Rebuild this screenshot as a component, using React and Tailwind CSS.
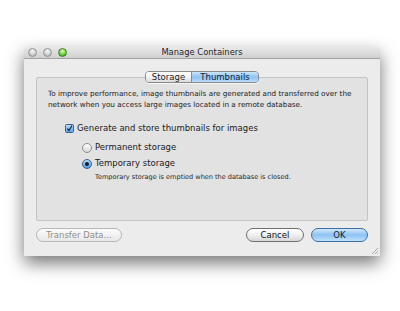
import React from "react";

const font = { fontFamily: '"DejaVu Sans", "Liberation Sans", sans-serif' };

function Light({ color }) {
  const styles = {
    gray: "bg-[radial-gradient(circle_at_50%_30%,#f7f7f7,#cdcdcd_60%,#a5a5a5)] border-[#939393]",
    green: "bg-[radial-gradient(circle_at_50%_30%,#dcffb8,#72d23c_55%,#3b8f1d)] border-[#3d7f22]",
  };
  return <div className={`w-[9px] h-[9px] rounded-full border ${styles[color]}`} />;
}

export default function App() {
  return (
    <div className="w-[400px] h-[311px] bg-white overflow-hidden pl-[24px] pt-[47px]" style={font}>
      <div className="w-[356px] h-[209px] flex flex-col bg-[#ececec] shadow-[0_7px_17px_rgba(0,0,0,0.55)] rounded-t-[3px]">
        {/* title bar */}
        <div className="relative h-[12px] flex items-center bg-gradient-to-b from-[#e9e9e9] to-[#d0d0d0] border-b border-[#a3a3a3] rounded-t-[3px]">
          <div className="flex items-center gap-[6px] pl-[4px]">
            <Light color="gray" />
            <Light color="gray" />
            <Light color="green" />
          </div>
          <div className="absolute inset-0 flex items-center justify-center text-[8.4px] text-[#262626]">
            Manage Containers
          </div>
        </div>
        {/* content */}
        <div className="flex-1 flex flex-col px-[12px] pt-[12px]">
          <div className="flex justify-center relative z-10">
            <div className="flex h-[12px] rounded-[4px] border border-[#8a8a8a] overflow-hidden text-[8.5px] leading-none shadow-[0_1px_0_rgba(255,255,255,0.7)]">
              <div className="w-[46px] flex items-center justify-center bg-gradient-to-b from-[#ffffff] via-[#f3f3f3] to-[#dcdcdc] text-[#1a1a1a] border-r border-[#8a8a8a]">
                Storage
              </div>
              <div className="w-[66px] flex items-center justify-center bg-gradient-to-b from-[#cfe6fb] via-[#8fc2f0] to-[#b8dcfa] text-[#0c1d35]">
                Thumbnails
              </div>
            </div>
          </div>
          <div className="-mt-[6px] h-[144px] bg-[#e2e2e2] border border-[#c4c4c4] rounded-[2px] pt-[10px] px-[11px]">
            <p className="text-[7.25px] leading-[11px] text-[#1c1c1c] whitespace-nowrap">
              To improve performance, image thumbnails are generated and transferred over the
              <br />
              network when you access large images located in a remote database.
            </p>
            <div className="mt-[13px] ml-[17px] h-[11px] flex items-center gap-[3px]">
              <div className="w-[9px] h-[9px] rounded-[1.5px] border border-[#3a5f8e] bg-gradient-to-b from-[#b9dbfa] to-[#5aa3e8] flex items-center justify-center">
                <svg width="9" height="9" viewBox="0 0 9 9">
                  <path d="M1.8 4.6 L3.8 7 L7.8 0.6" fill="none" stroke="#0d1f3a" strokeWidth="1.5" />
                </svg>
              </div>
              <span className="text-[8.5px] leading-none text-[#1a1a1a]">Generate and store thumbnails for images</span>
            </div>
            <div className="mt-[8px] ml-[34px] h-[11px] flex items-center gap-[3px]">
              <div className="w-[10px] h-[10px] rounded-full border border-[#8d8d8d] bg-gradient-to-b from-[#ffffff] to-[#d8d8d8]" />
              <span className="text-[8.5px] leading-none text-[#1a1a1a]">Permanent storage</span>
            </div>
            <div className="mt-[5px] ml-[34px] h-[11px] flex items-center gap-[3px]">
              <div className="w-[10px] h-[10px] rounded-full border border-[#3a5f8e] bg-gradient-to-b from-[#b9dbfa] to-[#4f9ae4] flex items-center justify-center">
                <div className="w-[4px] h-[4px] rounded-full bg-[#0d1f3a]" />
              </div>
              <span className="text-[8.5px] leading-none text-[#1a1a1a]">Temporary storage</span>
            </div>
            <p className="mt-[4px] ml-[47px] text-[6.55px] leading-[8px] text-[#2a2a2a]">
              Temporary storage is emptied when the database is closed.
            </p>
          </div>
          {/* buttons */}
          <div className="mt-[7px] flex items-center">
            <div className="w-[86px] h-[14px] rounded-full border border-[#b8b8b8] bg-gradient-to-b from-[#fbfbfb] to-[#e8e8e8] flex items-center justify-center text-[8.5px] text-[#8f8f8f]">
              Transfer Data...
            </div>
            <div className="flex-1" />
            <div className="w-[58px] h-[14px] rounded-full border border-[#6f6f6f] bg-gradient-to-b from-[#ffffff] via-[#f0f0f0] to-[#d6d6d6] flex items-center justify-center text-[8.5px] text-[#111]">
              Cancel
            </div>
            <div className="ml-[7px] w-[57px] h-[14px] rounded-full border border-[#3d6fa8] bg-gradient-to-b from-[#d2e8fc] via-[#8cc2f2] to-[#bfe2fd] flex items-center justify-center text-[8.5px] text-[#0b1a30]">
              OK
            </div>
          </div>
          <div className="flex-1 flex items-end justify-end -mr-[11px] pb-[1px]">
            <svg width="8" height="8" viewBox="0 0 8 8">
              <path d="M7 1 L1 7 M7 4 L4 7 M7 6.5 L6.5 7" stroke="#9a9a9a" strokeWidth="0.8" />
            </svg>
          </div>
        </div>
      </div>
    </div>
  );
}
